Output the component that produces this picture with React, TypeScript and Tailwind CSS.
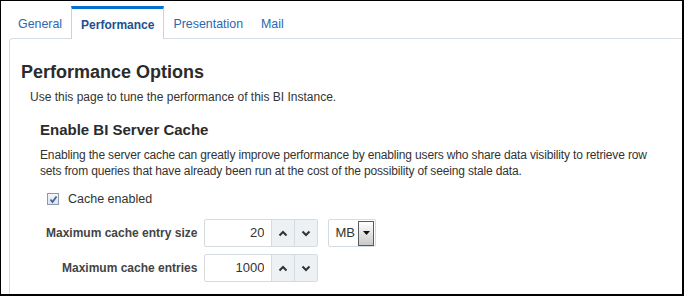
import { useState } from "react";

const FONT = { fontFamily: '"Liberation Sans", Arial, sans-serif' };

const TABS = ["General", "Performance", "Presentation", "Mail"];

function Chevron({ up }: { up?: boolean }) {
  return (
    <svg width="10" height="7" viewBox="0 0 10 7" className="text-[#333]">
      <polyline
        points={up ? "1.5,5.5 5,2 8.5,5.5" : "1.5,1.5 5,5 8.5,1.5"}
        fill="none"
        stroke="currentColor"
        strokeWidth="2"
      />
    </svg>
  );
}

function NumberField({ value }: { value: string }) {
  return (
    <div className="flex h-[28px] w-[114px] rounded-[2px] border border-[#d4dbe1] bg-white">
      <input
        readOnly
        value={value}
        className="w-[66px] bg-transparent pr-[7px] text-right text-[13px] text-[#333] outline-none"
      />
      <button
        type="button"
        className="flex w-[23px] items-center justify-center border-l border-[#d4dbe1] bg-[#eef1f3]"
      >
        <Chevron up />
      </button>
      <button
        type="button"
        className="flex w-[23px] items-center justify-center border-l border-[#d4dbe1] bg-[#eef1f3]"
      >
        <Chevron />
      </button>
    </div>
  );
}

export default function App() {
  const [tab, setTab] = useState("Performance");

  return (
    <div
      style={FONT}
      className="flex h-[296px] w-[684px] flex-col overflow-hidden border-t border-l border-r-2 border-b-2 border-black bg-white"
    >
      <div className="flex pl-[8px] pt-[5px]">
        {TABS.map((t) => {
          const active = t === tab;
          return (
            <button
              key={t}
              type="button"
              onClick={() => setTab(t)}
              className={
                active
                  ? "relative z-10 -mb-px flex h-[33px] items-center border-x border-t-[3px] border-x-[#c9d3dc] border-t-[#0572ce] bg-white px-[9px] pb-[1px] pt-[2px] text-[12px] font-bold text-[#1f4f8f]"
                  : "flex h-[32px] items-center border-t-[3px] border-transparent px-[9px] pt-[2px] text-[12.4px] text-[#2c68b1]"
              }
            >
              {t}
            </button>
          );
        })}
      </div>

      <div className="ml-[8px] flex-1 rounded-tl-[4px] border-t border-l border-[#d6dde4]">
        <h1 className="ml-[11px] mt-[22px] text-[18px] font-bold leading-[22px] text-[#2b2b2b]">
          Performance Options
        </h1>
        <p className="ml-[20px] mt-[6px] text-[12px] leading-[16px] text-[#333]">
          Use this page to tune the performance of this BI Instance.
        </p>

        <div className="ml-[30px]">
          <h2 className="mt-[16px] text-[15px] font-bold leading-[18px] text-[#2b2b2b]">
            Enable BI Server Cache
          </h2>
          <p className="mt-[8px] w-[625px] text-[12px] leading-[16px] tracking-[-0.15px] text-[#333]">
            Enabling the server cache can greatly improve performance by enabling users who share data
            visibility to retrieve row sets from queries that have already been run at the cost of the
            possibility of seeing stale data.
          </p>

          <label className="ml-[7px] mt-[12px] flex h-[16px] items-center gap-[9px] text-[12.5px] text-[#333]">
            <span className="flex h-[12px] w-[12px] items-center justify-center border border-[#8c99a6] bg-gradient-to-b from-[#f4f6f8] to-[#dfe5ea]">
              <svg width="9" height="9" viewBox="0 0 9 9">
                <polyline points="1.5,4.5 3.5,7 7.5,1.5" fill="none" stroke="#3f63a8" strokeWidth="1.8" />
              </svg>
            </span>
            Cache enabled
          </label>

          <div className="ml-[6px] mt-[12px] grid w-fit grid-cols-[auto_auto_auto] items-center gap-x-[7px] gap-y-[7px]">
            <span className="justify-self-end text-[12px] font-bold text-[#444]">
              Maximum cache entry size
            </span>
            <NumberField value="20" />
            <div className="ml-[3px] flex h-[28px] w-[48px] items-center justify-between rounded-[2px] border border-[#d4dbe1] bg-white pl-[6px] pr-[1px]">
              <span className="text-[13px] text-[#333]">MB</span>
              <span className="flex h-[25px] w-[16px] items-center justify-center border border-[#5a5a5a] bg-gradient-to-b from-white to-[#c9c9c9]">
                <svg width="7" height="4" viewBox="0 0 7 4">
                  <polygon points="0,0 7,0 3.5,4" fill="#111" />
                </svg>
              </span>
            </div>

            <span className="justify-self-end text-[12px] font-bold text-[#444]">
              Maximum cache entries
            </span>
            <NumberField value="1000" />
            <span />
          </div>
        </div>
      </div>
    </div>
  );
}
